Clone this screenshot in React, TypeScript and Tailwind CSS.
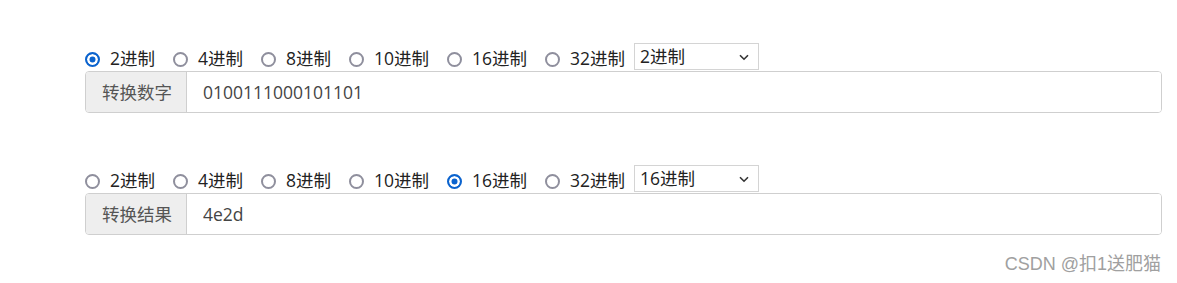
import React, { useState } from 'react';

const BASES = [2, 4, 8, 10, 16, 32];

interface BaseRowProps {
  name: string;
  base: number;
  onChange: (b: number) => void;
  label: string;
  value: string;
}

const BaseRow: React.FC<BaseRowProps> = ({ name, base, onChange, label, value }) => {
  return (
    <div className="w-[1077px]">
      {/* radios + select */}
      <div className="flex items-end h-[28px]">
        {BASES.map((b) => (
          <label key={b} className="flex items-center mr-[18px] mb-[2px] leading-[22px] text-[17.5px] text-[#222] cursor-pointer">
            <input
              type="radio"
              name={name}
              checked={base === b}
              onChange={() => onChange(b)}
              className="appearance-none w-[15px] h-[15px] rounded-full border-2 border-[#8f8f9d] bg-white checked:border-[#0b63ce] checked:bg-[#0b63ce] checked:shadow-[inset_0_0_0_2.5px_white] mr-[10px] mt-[2px] shrink-0"
            />
            {b}进制
          </label>
        ))}
        <div className="relative -ml-[9px] mb-[1px]">
          <select
            value={base}
            onChange={(e) => onChange(Number(e.target.value))}
            className="appearance-none w-[125px] h-[27px] border border-[#d4d4d4] bg-white pl-[5px] text-[17.5px] text-[#222] leading-[25px] outline-none"
          >
            {BASES.map((b) => (
              <option key={b} value={b}>
                {b}进制
              </option>
            ))}
          </select>
          <svg
            className="absolute right-[10px] top-[11px] w-[10px] h-[7px] pointer-events-none"
            viewBox="0 0 10 7"
            fill="none"
            stroke="#333"
            strokeWidth={1.6}
          >
            <path d="M1 1.2l4 4 4-4" />
          </svg>
        </div>
      </div>

      {/* input group */}
      <div className="flex h-[42px] border border-[#cfcfcf] rounded-[4px] overflow-hidden">
        <span className="flex items-center w-[101px] shrink-0 pl-[16px] bg-[#eeeeee] border-r border-[#cfcfcf] text-[17.5px] text-[#555]">
          {label}
        </span>
        <input
          value={value}
          readOnly
          className="flex-1 pl-[16px] text-[17.5px] text-[#444] bg-white outline-none"
        />
      </div>
    </div>
  );
};

export default function App() {
  const [fromBase, setFromBase] = useState(2);
  const [toBase, setToBase] = useState(16);
  const input = '0100111000101101';
  const parsed = parseInt(input, fromBase);
  const result = isNaN(parsed) ? '' : parsed.toString(toBase);

  return (
    <div className="relative w-[1177px] h-[283px] bg-white font-['Open_Sans','Noto_Sans_CJK_SC',sans-serif]">
      <div className="pt-[43px] pl-[85px] flex flex-col gap-[52px]">
        <BaseRow name="from" base={fromBase} onChange={setFromBase} label="转换数字" value={input} />
        <BaseRow name="to" base={toBase} onChange={setToBase} label="转换结果" value={result} />
      </div>
      <div className="absolute right-[16px] top-[251px] text-[18px] text-[#a0a0a0] font-['Liberation_Sans','Noto_Sans_CJK_SC',sans-serif]">
        CSDN @扣1送肥猫
      </div>
    </div>
  );
}
